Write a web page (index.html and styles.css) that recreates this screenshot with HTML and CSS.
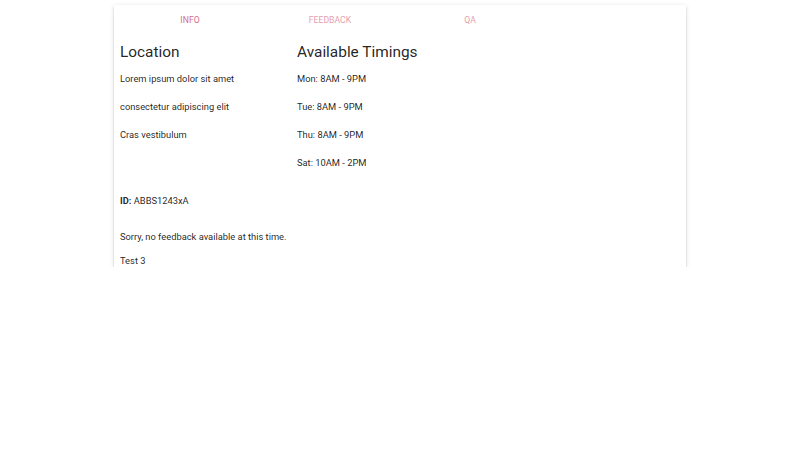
FILE: index.html
```html
<!DOCTYPE html>
<html>
<head>
<meta charset="utf-8">
<link rel="stylesheet" href="styles.css">
</head>
<body>
<div class="card">
  <div class="tabs">
    <div class="tab active">INFO</div>
    <div class="tab">FEEDBACK</div>
    <div class="tab">QA</div>
  </div>
  <div class="content">
    <div class="cols">
      <div class="col col-loc">
        <h3>Location</h3>
        <p>Lorem ipsum dolor sit amet</p>
        <p>consectetur adipiscing elit</p>
        <p>Cras vestibulum</p>
      </div>
      <div class="col">
        <h3>Available Timings</h3>
        <p>Mon: 8AM - 9PM</p>
        <p>Tue: 8AM - 9PM</p>
        <p>Thu: 8AM - 9PM</p>
        <p>Sat: 10AM - 2PM</p>
      </div>
    </div>
    <p class="id"><b>ID:</b> ABBS1243xA</p>
    <p class="fb">Sorry, no feedback available at this time.</p>
    <p class="test">Test 3</p>
  </div>
</div>
</body>
</html>
```
FILE: styles.css
```css
html, body {
  margin: 0;
  padding: 0;
  background: #fff;
}
body {
  font-family: Roboto, "Liberation Sans", sans-serif;
  color: rgba(0,0,0,0.87);
  font-size: 9.33px;
  padding-top: 5px;
}
.card {
  width: 572px;
  margin: 0 auto;
  background: #fff;
  box-shadow: 0 2px 2px rgba(0,0,0,0.14), 0 3px 1px -2px rgba(0,0,0,0.2), 0 1px 5px rgba(0,0,0,0.12);
  padding: 0 6px 0 6px;
  box-sizing: border-box;
}
.tabs {
  display: flex;
  height: 30px;
  align-items: center;
}
.tab {
  width: 140px;
  text-align: center;
  font-size: 8.67px;
  color: #e8a0ae;
}
.tab.active {
  color: #da6f86;
}
.cols {
  display: flex;
}
.col-loc {
  width: 177px;
}
h3 {
  font-size: 15.4px;
  font-weight: 400;
  margin: 5px 0 0 0;
  line-height: 24px;
}
p {
  margin: 0;
  line-height: 28px;
}
.col h3 + p {
  margin-top: 1px;
}
.id {
  margin-top: 10px;
}
.fb {
  margin-top: 8px;
}
.test {
  margin-top: 4px;
  line-height: 12px;
}
```
